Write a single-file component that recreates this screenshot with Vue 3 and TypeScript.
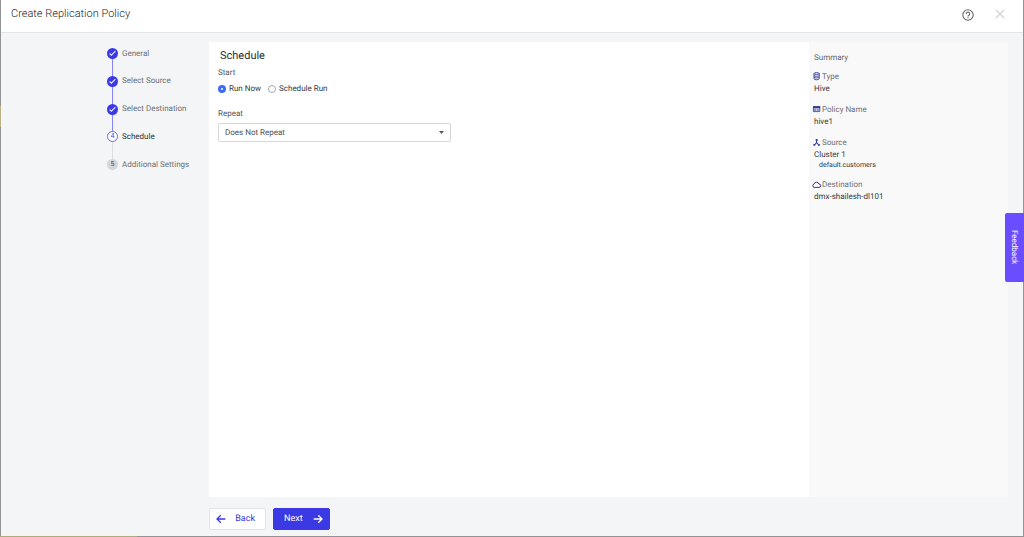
<script setup lang="ts">
import { ref } from 'vue'

type StepState = 'done' | 'current' | 'pending'
interface Step { label: string; state: StepState }
interface SummaryItem { icon: string; label: string; value: string; detail?: string }

const steps: Step[] = [
  { label: 'General', state: 'done' },
  { label: 'Select Source', state: 'done' },
  { label: 'Select Destination', state: 'done' },
  { label: 'Schedule', state: 'current' },
  { label: 'Additional Settings', state: 'pending' },
]

const summary: SummaryItem[] = [
  { icon: 'database', label: 'Type', value: 'Hive' },
  { icon: 'card', label: 'Policy Name', value: 'hive1' },
  { icon: 'source', label: 'Source', value: 'Cluster 1', detail: 'default.customers' },
  { icon: 'cloud', label: 'Destination', value: 'dmx-shailesh-dl101' },
]

const start = ref('now')
const repeat = ref('none')
</script>

<template>
  <div class="window">
    <header class="header">
      <h1 class="title">Create Replication Policy</h1>
      <button class="icon-button" type="button" aria-label="Help">
        <svg width="12" height="12" viewBox="0 0 12 12" fill="none" stroke="#66696d">
          <circle cx="6" cy="6" r="5.2" stroke-width="1.1" />
          <path d="M4.3 4.9a1.7 1.7 0 1 1 2.7 1.3c-.7.5-1 .7-1 1.3" stroke-width="1.1" />
          <path d="M6 8.2v1.1" stroke-width="1.2" />
        </svg>
      </button>
      <button class="icon-button" type="button" aria-label="Close">
        <svg width="10" height="10" viewBox="0 0 10 10" fill="none" stroke="#d0d3d6" stroke-width="1.2">
          <path d="M1 1l8 8M9 1l-8 8" />
        </svg>
      </button>
    </header>

    <div class="body">
      <nav class="sidebar" aria-label="Wizard steps">
        <ol class="steps">
          <li v-for="(step, i) in steps" :key="step.label" class="step" :class="step.state">
            <span class="badge">
              <svg v-if="step.state === 'done'" width="11" height="11" viewBox="0 0 11 11" fill="none" stroke="#e4e4ff" stroke-width="1.2">
                <path d="M2.6 5.5l1.8 1.6 4-4" />
              </svg>
              <template v-else>{{ i + 1 }}</template>
            </span>
            <span>{{ step.label }}</span>
          </li>
        </ol>
      </nav>

      <main class="content">
        <div class="panel">
          <form id="schedule-form" class="form" @submit.prevent>
            <h2 class="heading">Schedule</h2>
            <fieldset class="group">
              <legend class="caption">Start</legend>
              <div class="radios">
                <label class="radio"><input v-model="start" type="radio" name="start" value="now">Run Now</label>
                <label class="radio"><input v-model="start" type="radio" name="start" value="later">Schedule Run</label>
              </div>
            </fieldset>
            <label class="caption" for="repeat">Repeat</label>
            <div class="select-box">
              <select id="repeat" v-model="repeat" class="select">
                <option value="none">Does Not Repeat</option>
                <option value="custom">Custom</option>
              </select>
              <svg class="caret" width="5" height="3" viewBox="0 0 5 3" fill="#55585c"><path d="M0 0h5L2.5 3z" /></svg>
            </div>
          </form>

          <aside class="summary">
            <h3 class="summary-title">Summary</h3>
            <dl class="summary-list">
              <div v-for="item in summary" :key="item.label" class="summary-item">
                <dt class="term">
                  <svg v-if="item.icon === 'database'" class="term-icon" width="9" height="9" viewBox="0 0 9 9" fill="none" stroke="#353998" stroke-width=".9">
                    <ellipse cx="4.6" cy="1.5" rx="2.6" ry=".9" />
                    <path d="M2 1.5v5.3c0 1.3 5.2 1.3 5.2 0V1.5M2 3.5c0 1 5.2 1 5.2 0M2 5.2c0 1 5.2 1 5.2 0" />
                  </svg>
                  <svg v-else-if="item.icon === 'card'" class="term-icon" width="9" height="9" viewBox="0 0 9 9" fill="none">
                    <path d="M1.4 1.9h6.4v4.7H1.4z" fill="#d9daf0" stroke="#353998" stroke-width=".8" />
                    <path d="M1 1.1h7.2v2.1H1z" fill="#353998" />
                    <path d="M2.2 4.3h2M2.2 5.4h2M5.2 4.3h1.6M5.2 5.4h1.6" stroke="#353998" stroke-width=".6" />
                  </svg>
                  <svg v-else-if="item.icon === 'source'" class="term-icon" width="9" height="9" viewBox="0 0 9 9" fill="none" stroke="#353998" stroke-width="1.1">
                    <path d="M4.6 1.5v3L2.4 7M4.6 4.5L6.8 7" />
                    <path d="M3.7.9h1.8v2.2H3.7zM1.4 6.1h1.8v1.7H1.4zM6 6.1h1.8v1.7H6z" fill="#353998" stroke="none" />
                  </svg>
                  <svg v-else class="term-icon" width="9" height="9" viewBox="0 0 9 9" fill="none" stroke="#353998" stroke-width="1">
                    <path d="M2.1 7.4a1.7 1.7 0 0 1-.1-3.3 2.6 2.6 0 0 1 5-.1 1.7 1.7 0 0 1 0 3.4z" />
                  </svg>
                  {{ item.label }}
                </dt>
                <dd class="value">{{ item.value }}</dd>
                <dd v-if="item.detail" class="detail">{{ item.detail }}</dd>
              </div>
            </dl>
          </aside>
        </div>

        <footer class="actions">
          <button class="button back" type="button">
            <svg width="10" height="10" viewBox="0 0 10 10" fill="none" stroke="currentColor" stroke-width="1.3"><path d="M9.3 5H1M4.8 1.2L1 5l3.8 3.8" /></svg>
            Back
          </button>
          <button class="button next" type="submit" form="schedule-form">
            Next
            <svg width="10" height="10" viewBox="0 0 10 10" fill="none" stroke="currentColor" stroke-width="1.3"><path d="M.7 5H9M5.2 1.2L9 5 5.2 8.8" /></svg>
          </button>
        </footer>
      </main>
    </div>

    <button class="feedback" type="button">Feedback</button>
  </div>
</template>

<style>
body { margin: 0; }
</style>

<style scoped>
.window {
  box-sizing: border-box;
  min-height: 100vh;
  display: flex;
  flex-direction: column;
  padding: 0 1px 1px;
  font-family: Roboto, "Liberation Sans", sans-serif;
  font-size: 8px;
  line-height: 12px;
  text-rendering: geometricPrecision;
  color: #36393e;
  background:
    linear-gradient(#b9b383, #b9b383) 0 106px / 1px 21px no-repeat,
    linear-gradient(#acad7c, #acad7c) 0 100% / 137px 1px no-repeat,
    #919396;
}
button, input, select { font: inherit; text-rendering: inherit; }
h1, h2, h3, ol, dl, dd, fieldset { margin: 0; padding: 0; border: 0; font-weight: 400; }
.header {
  display: flex;
  align-items: center;
  height: 32px;
  padding: 0 18px 0 10px;
  background: #fff;
  border-bottom: 1px solid #e3e5e7;
}
.title {
  flex: 1;
  padding-bottom: 5px;
  font-size: 11px;
  font-weight: 300;
  line-height: 16px;
  color: #202328;
}
.icon-button {
  display: flex;
  padding: 0;
  margin: 0 0 4px 21px;
  border: 0;
  background: none;
}
.header .icon-button:first-of-type { margin-bottom: 2px; }
.body {
  flex: 1;
  display: flex;
  padding: 9px 15px 6px 0;
  background: #f3f5f7;
}
.sidebar { flex: 0 0 208px; box-sizing: border-box; padding: 6px 0 0 106px; }
.steps {
  display: flex;
  flex-direction: column;
  justify-content: space-between;
  height: 122px;
  list-style: none;
  background: linear-gradient(#8585f6, #8585f6) 5px 6px / 1px 84px no-repeat,
    linear-gradient(#dcdde0, #dcdde0) 5px 90px / 1px 26px no-repeat;
}
.step { display: flex; align-items: center; gap: 4px; height: 11px; color: #6d7176; white-space: nowrap; }
.badge {
  box-sizing: border-box;
  width: 11px;
  height: 11px;
  display: flex;
  align-items: center;
  justify-content: center;
  border-radius: 50%;
  font-size: 7px;
  line-height: 11px;
  background: #d5d6d9;
  color: #45484d;
}
.done .badge { background: #3a39e4; }
.current { color: #303238; }
.current .badge { background: #fff; border: 1px solid #6868ee; color: #4848e4; }
.content { flex: 1; display: flex; flex-direction: column; min-width: 0; }
.panel { flex: 1; display: flex; background: #fff; }
.form { flex: 1; padding: 6px 9px; }
.heading { padding-left: 2px; font-size: 11px; line-height: 16px; color: #2c2e33; }
.group { margin: 3px 0 13px; min-width: 0; }
.caption { display: block; padding: 0; line-height: 12px; color: #53565b; }
.radios { display: flex; gap: 7px; padding-top: 4px; }
.radio { display: flex; align-items: center; gap: 3px; }
.radio input {
  appearance: none;
  box-sizing: border-box;
  width: 8px;
  height: 8px;
  margin: 0;
  border: 1px solid #a5a7aa;
  border-radius: 50%;
  background: #fff;
}
.radio input:checked { border: 3px solid #3f6cf6; }
.select-box { display: grid; align-items: center; max-width: 233px; margin-top: 3px; }
.select {
  grid-area: 1 / 1;
  appearance: none;
  box-sizing: border-box;
  width: 100%;
  height: 19px;
  padding: 0 6px;
  border: 1px solid #d6d7d9;
  border-radius: 2px;
  background: #fff;
  color: #4c4f54;
}
.caret { grid-area: 1 / 1; justify-self: end; margin-right: 7px; pointer-events: none; }
.summary { flex: 0 0 199px; box-sizing: border-box; padding: 10px 5px; background: #f9f9f9; }
.summary-title { font-size: 8px; line-height: 12px; color: #66696e; }
.summary-list { display: flex; flex-direction: column; gap: 9px; margin-top: 7px; }
.term { display: flex; align-items: flex-start; gap: 1px; margin-left: -2px; color: #6d7075; }
.term-icon { margin-top: 1px; overflow: visible; }
.detail { padding-left: 5px; font-size: 7px; line-height: 9px; }
.actions { display: flex; gap: 7px; padding-top: 11px; }
.button {
  box-sizing: border-box;
  display: flex;
  align-items: center;
  justify-content: space-between;
  width: 57px;
  height: 22px;
  border: 1px solid #e2e3e8;
  border-radius: 2px;
  font-size: 9px;
  background: #fff;
  color: #3a39e4;
}
.back { padding: 0 10px 0 6px; }
.next { padding: 0 6px 0 10px; border-color: #3a39e4; background: #3a39e4; color: #fff; }
.feedback {
  position: fixed;
  top: 213px;
  right: 0;
  width: 19px;
  height: 69px;
  padding: 0;
  border: 0;
  border-radius: 2px 0 0 2px;
  writing-mode: vertical-rl;
  text-align: center;
  line-height: 19px;
  background: #6a4dff;
  color: #fff;
}
</style>
